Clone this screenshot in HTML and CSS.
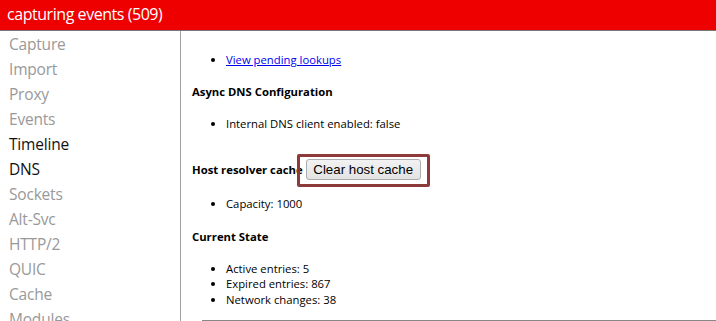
FILE: index.html
```html
<!DOCTYPE html>
<html>
<head>
<meta charset="utf-8">
<link rel="stylesheet" href="styles.css">
</head>
<body>
<header class="titlebar">capturing events (509)</header>
<div class="main">
  <nav class="sidebar">
    <div class="tab">Capture</div>
    <div class="tab">Import</div>
    <div class="tab">Proxy</div>
    <div class="tab">Events</div>
    <div class="tab dark">Timeline</div>
    <div class="tab dark">DNS</div>
    <div class="tab">Sockets</div>
    <div class="tab">Alt-Svc</div>
    <div class="tab">HTTP/2</div>
    <div class="tab">QUIC</div>
    <div class="tab">Cache</div>
    <div class="tab">Modules</div>
  </nav>
  <section class="content">
    <ul class="list first">
      <li><a href="#">View pending lookups</a></li>
    </ul>
    <h4 class="heading">Async DNS Configuration</h4>
    <ul class="list">
      <li>Internal DNS client enabled: false</li>
    </ul>
    <div class="hostrow">
      <h4 class="heading inline">Host resolver cache</h4>
      <span class="highlight"><button class="btn">Clear host cache</button></span>
    </div>
    <ul class="list">
      <li>Capacity: 1000</li>
    </ul>
    <h4 class="heading state">Current State</h4>
    <ul class="list">
      <li>Active entries: 5</li>
      <li>Expired entries: 867</li>
      <li>Network changes: 38</li>
    </ul>
    <hr class="rule">
  </section>
</div>
</body>
</html>
```

FILE: styles.css
```css
html, body {
  margin: 0;
  padding: 0;
  height: 100%;
  overflow: hidden;
  background: #fff;
}
body {
  font-family: "Open Sans", "Noto Sans", sans-serif;
  color: #000;
}
.titlebar {
  height: 30px;
  background: #ee0000;
  color: #fff;
  font-size: 16px;
  line-height: 28px;
  padding-left: 7px;
  border-bottom: 1px solid #777;
  letter-spacing: -0.45px;
}
.main {
  display: flex;
  height: 290px;
}
.sidebar {
  width: 180px;
  border-right: 1px solid #a0a0a0;
  padding-top: 1px;
  flex: none;
}
.tab {
  font-size: 15.5px;
  line-height: 25px;
  padding-left: 9px;
  color: #999;
  letter-spacing: -0.2px;
}
.tab.dark {
  color: #111;
}
.content {
  flex: 1;
  padding-left: 11px;
  font-size: 11.3px;
  line-height: 16px;
}
.list {
  margin: 16px 0 0 0;
  padding-left: 34px;
}
.list li {
  line-height: 15.5px;
}
.list.first {
  margin-top: 21px;
}
.list a {
  color: #0000ee;
}
.heading {
  margin: 16px 0 0 0;
  font-size: 11.3px;
  font-weight: bold;
  line-height: 16px;
}
.heading.state {
  margin-top: 17px;
}
.hostrow {
  margin-top: 28px;
  display: flex;
  align-items: center;
  gap: 3px;
  height: 21px;
}
.heading.inline {
  margin: 0;
}
.highlight {
  position: relative;
  display: inline-block;
  height: 21px;
}
.highlight::after {
  content: "";
  position: absolute;
  left: -9px;
  right: -9px;
  top: -5px;
  bottom: -7px;
  border: 3px solid #8e3a3a;
  border-radius: 2px;
}
.btn {
  font-family: "Liberation Sans", Arial, sans-serif;
  font-size: 13.3px;
  height: 21px;
  width: 115px;
  padding: 0;
  margin: 0;
  border: 1px solid #acacac;
  border-radius: 3px;
  background: linear-gradient(#f2f2f2, #e3e3e3);
  color: #000;
}
.rule {
  margin: 13px 0 0 10px;
  border: 0;
  border-top: 1px solid #888;
  height: 0;
}
```
